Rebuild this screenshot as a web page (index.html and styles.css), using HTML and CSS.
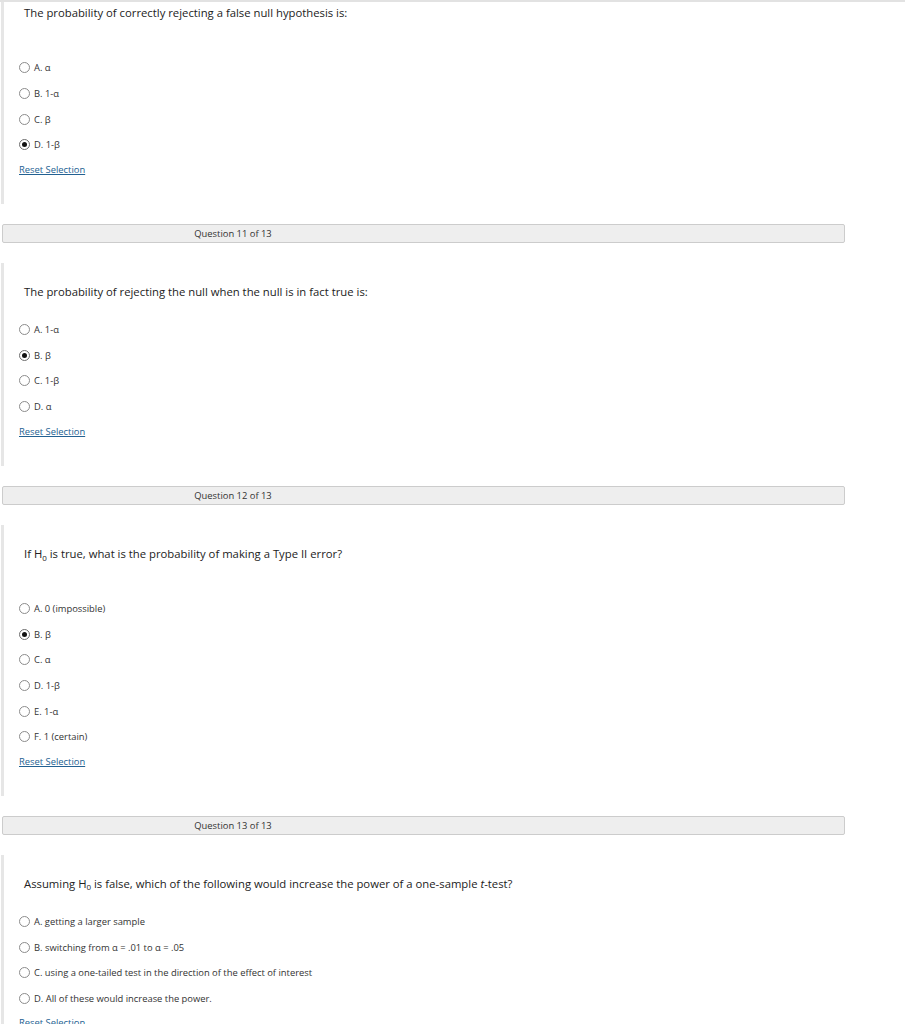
FILE: index.html
```html
<!DOCTYPE html>
<html lang="en">
<head>
<meta charset="utf-8">
<title>Quiz</title>
<link rel="stylesheet" href="styles.css">
</head>
<body>
<div class="page">

  <section class="question question-first">
    <p class="qtext qtext-tall">The probability of correctly rejecting a false null hypothesis is:</p>
    <ul class="options">
      <li class="option"><span class="radio"></span><span class="label">A. α</span></li>
      <li class="option"><span class="radio"></span><span class="label">B. 1-α</span></li>
      <li class="option"><span class="radio"></span><span class="label">C. β</span></li>
      <li class="option"><span class="radio checked"></span><span class="label">D. 1-β</span></li>
    </ul>
    <a class="reset" href="#">Reset Selection</a>
  </section>

  <div class="qheader"><span class="qheader-title">Question 11 of 13</span></div>

  <section class="question">
    <p class="qtext">The probability of rejecting the null when the null is in fact true is:</p>
    <ul class="options">
      <li class="option"><span class="radio"></span><span class="label">A. 1-α</span></li>
      <li class="option"><span class="radio checked"></span><span class="label">B. β</span></li>
      <li class="option"><span class="radio"></span><span class="label">C. 1-β</span></li>
      <li class="option"><span class="radio"></span><span class="label">D. α</span></li>
    </ul>
    <a class="reset" href="#">Reset Selection</a>
  </section>

  <div class="qheader"><span class="qheader-title">Question 12 of 13</span></div>

  <section class="question">
    <p class="qtext qtext-tall">If H<sub>0</sub> is true, what is the probability of making a Type II error?</p>
    <ul class="options">
      <li class="option"><span class="radio"></span><span class="label">A. 0 (impossible)</span></li>
      <li class="option"><span class="radio checked"></span><span class="label">B. β</span></li>
      <li class="option"><span class="radio"></span><span class="label">C. α</span></li>
      <li class="option"><span class="radio"></span><span class="label">D. 1-β</span></li>
      <li class="option"><span class="radio"></span><span class="label">E. 1-α</span></li>
      <li class="option"><span class="radio"></span><span class="label">F. 1 (certain)</span></li>
    </ul>
    <a class="reset" href="#">Reset Selection</a>
  </section>

  <div class="qheader"><span class="qheader-title">Question 13 of 13</span></div>

  <section class="question">
    <p class="qtext">Assuming H<sub class="small">0</sub> is false, which of the following would increase the power of a one-sample <i>t</i>-test?</p>
    <ul class="options">
      <li class="option"><span class="radio"></span><span class="label">A. getting a larger sample</span></li>
      <li class="option"><span class="radio"></span><span class="label">B. switching from α = .01 to α = .05</span></li>
      <li class="option"><span class="radio"></span><span class="label">C. using a one-tailed test in the direction of the effect of interest</span></li>
      <li class="option"><span class="radio"></span><span class="label">D. All of these would increase the power.</span></li>
    </ul>
    <a class="reset" href="#">Reset Selection</a>
  </section>

</div>
</body>
</html>
```

FILE: styles.css
```css
html, body {
  margin: 0;
  padding: 0;
  background: #ffffff;
}

body {
  font-family: "Open Sans", "Liberation Sans", sans-serif;
  color: #333333;
}

.page {
  border-top: 2px solid #e2e2e2;
  width: 905px;
}

.question {
  margin-left: 1px;
  border-left: 3px solid #e6e6e6;
  padding: 21px 0 28px 0;
  display: flex;
  flex-direction: column;
  align-items: flex-start;
}

.question-first {
  padding-top: 3px;
}

.qtext {
  margin: 0 0 0 20px;
  font-size: 11.3px;
  line-height: 16px;
  color: #222222;
}

.qtext-tall {
  padding-bottom: 17px;
}

.qtext sub {
  font-size: 8px;
  line-height: 0;
  vertical-align: -3px;
}

.qtext sub.small {
  vertical-align: -2px;
}

.options {
  list-style: none;
  margin: 17px 0 0 0;
  padding: 0;
}

.option {
  height: 25.7px;
  display: flex;
  align-items: center;
  padding-left: 15px;
  font-size: 9.4px;
  color: #333333;
}

.radio {
  width: 11px;
  height: 11px;
  box-sizing: border-box;
  border: 1px solid #8c8c8c;
  border-radius: 50%;
  background: #ffffff;
  display: flex;
  align-items: center;
  justify-content: center;
  flex: none;
}

.radio.checked {
  border-color: #6e6e6e;
}

.radio.checked::after {
  content: "";
  width: 5px;
  height: 5px;
  border-radius: 50%;
  background: #111111;
}

.label {
  margin-left: 4px;
  white-space: nowrap;
}

.reset {
  margin: 6px 0 0 15px;
  font-size: 9.4px;
  line-height: 12px;
  color: #236192;
  text-decoration: underline;
}

.qheader {
  margin: 20px 0 20px 2px;
  width: 843px;
  height: 19px;
  box-sizing: border-box;
  border: 1px solid #cccccc;
  border-radius: 2px;
  background: #eeeeee;
  display: flex;
}

.qheader-title {
  width: 460px;
  font-size: 9.4px;
  line-height: 17px;
  color: #333333;
  text-align: center;
}
```
